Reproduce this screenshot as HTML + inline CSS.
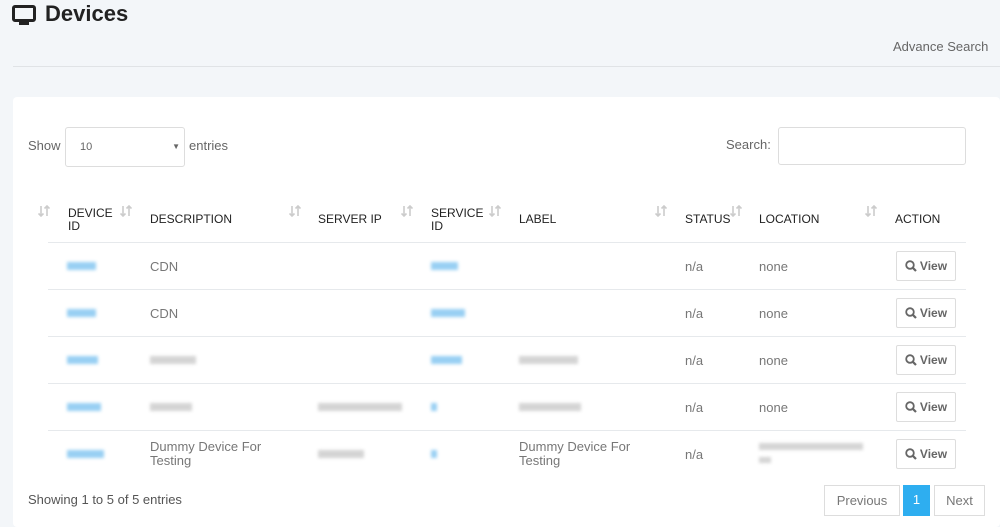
<!DOCTYPE html><html><head><style>
body{margin:0;width:1000px;height:516px;background:#f3f6f9;font-family:"Liberation Sans",sans-serif;position:relative;overflow:hidden;color:#555}
.a{position:absolute}
.h{font-size:12px;color:#222;line-height:13px}
.s{position:absolute;top:205px}
.t{font-size:13px;color:#777}
.line{position:absolute;left:48px;width:918px;height:1px;background:#e6e9ec}
.b{position:absolute;height:8px;filter:blur(1.5px);opacity:.8}
.bl{background:#7fc4f0}.gr{background:#aaa}
.v{position:absolute;left:896px;width:58px;height:28px;border:1px solid #ddd;border-radius:2px;background:#fff;font-size:12px;font-weight:bold;color:#666;line-height:28px;text-align:center}
.v svg{vertical-align:-2px;margin-right:3px}
</style></head><body>
<svg width="0" height="0" style="position:absolute"><defs>
<g id="so"><path d="M3 1v10M0.5 8.5L3 11L5.5 8.5" fill="none" stroke="#ccc" stroke-width="1.6"/><path d="M9 11V1M6.5 3.5L9 1L11.5 3.5" fill="none" stroke="#ccc" stroke-width="1.6"/></g>
<g id="mg"><circle cx="5" cy="5" r="3.8" fill="none" stroke="#666" stroke-width="1.8"/><path d="M7.8 7.8L11 11" stroke="#666" stroke-width="2.2"/></g>
</defs></svg>
<svg class="a" style="left:12px;top:5px" width="24" height="21" viewBox="0 0 24 21"><rect x="1.5" y="1.5" width="21" height="14" rx="1.5" fill="none" stroke="#222" stroke-width="3"/><rect x="7" y="16" width="10" height="4" fill="#222"/></svg>
<div class="a" style="left:45px;top:1px;font-size:22px;font-weight:bold;color:#222">Devices</div>
<div class="a" style="left:893px;top:39px;font-size:13px;color:#666">Advance Search</div>
<div class="a" style="left:13px;top:66px;width:987px;height:1px;background:#e0e3e6"></div>
<div class="a" style="left:13px;top:97px;width:987px;height:430px;background:#fff;border-radius:4px"></div>
<div class="a t" style="left:28px;top:138px;color:#666">Show</div>
<div class="a" style="left:65px;top:127px;width:118px;height:38px;border:1px solid #ddd;border-radius:3px;font-size:11px;line-height:38px;color:#666"><span style="margin-left:14px">10</span><span style="position:absolute;right:4px;font-size:8px">▼</span></div>
<div class="a t" style="left:189px;top:138px;color:#666">entries</div>
<div class="a t" style="left:726px;top:137px;color:#666">Search:</div>
<div class="a" style="left:778px;top:127px;width:186px;height:36px;border:1px solid #ddd;border-radius:3px"></div>
<svg class="s" style="left:38px" width="12" height="12"><use href="#so"/></svg>
<div class="a h" style="left:68px;top:207px">DEVICE<br>ID</div><svg class="s" style="left:120px" width="12" height="12"><use href="#so"/></svg>
<div class="a h" style="left:150px;top:213px">DESCRIPTION</div><svg class="s" style="left:289px" width="12" height="12"><use href="#so"/></svg>
<div class="a h" style="left:318px;top:213px">SERVER IP</div><svg class="s" style="left:401px" width="12" height="12"><use href="#so"/></svg>
<div class="a h" style="left:431px;top:207px">SERVICE<br>ID</div><svg class="s" style="left:489px" width="12" height="12"><use href="#so"/></svg>
<div class="a h" style="left:519px;top:213px">LABEL</div><svg class="s" style="left:655px" width="12" height="12"><use href="#so"/></svg>
<div class="a h" style="left:685px;top:213px">STATUS</div><svg class="s" style="left:730px" width="12" height="12"><use href="#so"/></svg>
<div class="a h" style="left:759px;top:213px">LOCATION</div><svg class="s" style="left:865px" width="12" height="12"><use href="#so"/></svg>
<div class="a h" style="left:895px;top:213px">ACTION</div>
<div class="line" style="top:242px"></div><div class="line" style="top:289px"></div><div class="line" style="top:336px"></div><div class="line" style="top:383px"></div><div class="line" style="top:430px"></div>
<div class="b bl" style="left:67px;top:262px;width:29px"></div><div class="a t" style="left:150px;top:259px">CDN</div><div class="b bl" style="left:431px;top:262px;width:27px"></div><div class="a t" style="left:685px;top:259px">n/a</div><div class="a t" style="left:759px;top:259px">none</div><div class="v" style="top:251px"><svg width="12" height="12"><use href="#mg"/></svg>View</div>
<div class="b bl" style="left:67px;top:309px;width:29px"></div><div class="a t" style="left:150px;top:306px">CDN</div><div class="b bl" style="left:431px;top:309px;width:34px"></div><div class="a t" style="left:685px;top:306px">n/a</div><div class="a t" style="left:759px;top:306px">none</div><div class="v" style="top:298px"><svg width="12" height="12"><use href="#mg"/></svg>View</div>
<div class="b bl" style="left:67px;top:356px;width:31px"></div><div class="b gr" style="left:150px;top:356px;width:46px;opacity:.5"></div><div class="b bl" style="left:431px;top:356px;width:31px"></div><div class="b gr" style="left:519px;top:356px;width:59px;opacity:.5"></div><div class="a t" style="left:685px;top:353px">n/a</div><div class="a t" style="left:759px;top:353px">none</div><div class="v" style="top:345px"><svg width="12" height="12"><use href="#mg"/></svg>View</div>
<div class="b bl" style="left:67px;top:403px;width:34px"></div><div class="b gr" style="left:150px;top:403px;width:42px;opacity:.5"></div><div class="b gr" style="left:318px;top:403px;width:84px;opacity:.5"></div><div class="b bl" style="left:431px;top:403px;width:6px"></div><div class="b gr" style="left:519px;top:403px;width:62px;opacity:.5"></div><div class="a t" style="left:685px;top:400px">n/a</div><div class="a t" style="left:759px;top:400px">none</div><div class="v" style="top:392px"><svg width="12" height="12"><use href="#mg"/></svg>View</div>
<div class="b bl" style="left:67px;top:450px;width:37px"></div><div class="a t" style="left:150px;top:440px;line-height:14px">Dummy Device For<br>Testing</div><div class="b gr" style="left:318px;top:450px;width:46px;opacity:.5"></div><div class="b bl" style="left:431px;top:450px;width:6px"></div><div class="a t" style="left:519px;top:440px;line-height:14px">Dummy Device For<br>Testing</div><div class="a t" style="left:685px;top:447px">n/a</div><div class="b gr" style="left:759px;top:443px;width:104px;height:7px;opacity:.5"></div><div class="b gr" style="left:759px;top:457px;width:12px;height:6px;opacity:.5"></div><div class="v" style="top:439px"><svg width="12" height="12"><use href="#mg"/></svg>View</div>
<div class="a t" style="left:28px;top:492px;color:#555">Showing 1 to 5 of 5 entries</div>
<div class="a" style="left:824px;top:485px;width:74px;height:29px;border:1px solid #ddd;font-size:13px;color:#777;line-height:29px;text-align:center">Previous</div>
<div class="a" style="left:903px;top:485px;width:27px;height:31px;background:#2eaef0;color:#fff;font-size:13px;line-height:29px;text-align:center">1</div>
<div class="a" style="left:934px;top:485px;width:49px;height:29px;border:1px solid #ddd;font-size:13px;color:#777;line-height:29px;text-align:center">Next</div>
</body></html>
